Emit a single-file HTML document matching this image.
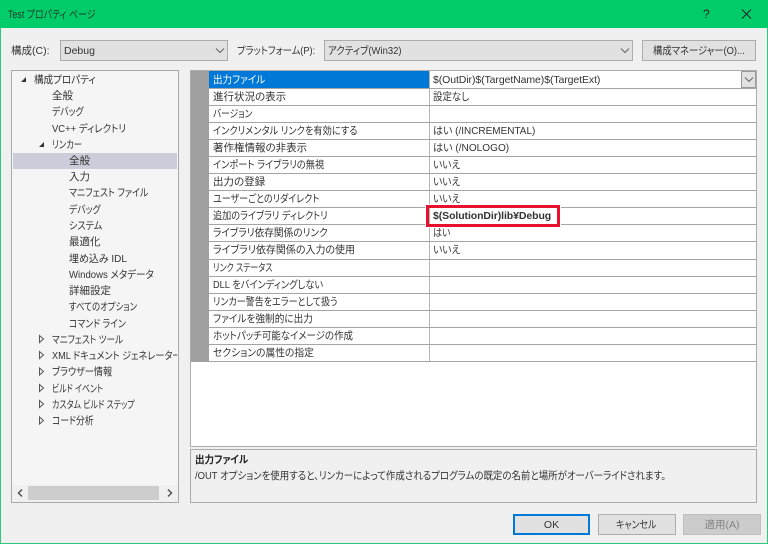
<!DOCTYPE html>
<html lang="ja">
<head>
<meta charset="utf-8">
<title>Test プロパティ ページ</title>
<style>
html,body{margin:0;padding:0;width:768px;height:544px;overflow:hidden;background:#f0f0f0}
body{position:relative;font-family:"Liberation Sans","Noto Sans CJK JP",sans-serif;font-size:10.5px;color:#333;font-feature-settings:"palt" 1}
#w{left:0;top:0;width:768px;height:544px;filter:blur(.35px)}
div{position:absolute;box-sizing:border-box;white-space:nowrap}
.t{line-height:16px;height:16px;margin-top:1px;transform:scaleX(var(--k,1));transform-origin:0 0}
.b{background:#e1e1e1;border:1px solid #adadad;text-align:center;line-height:20px}
.n{left:213px}
.v{left:433px}
.l{left:209px;width:547px;height:1px;background:#a5a5a5}
svg{position:absolute;overflow:visible}
</style>
</head>
<body>
<div id="w">
<div style="left:0;top:0;width:768px;height:544px;border:1px solid #2fc781;border-top:0"></div>
<div style="left:0;top:0;width:768px;height:28px;background:#00cc6a"></div>
<div class="t" style="left:8px;top:6px;font-size:11px;color:#1d3a2a;--k:.81">Test プロパティ ページ</div>
<div class="t" style="left:703px;top:5px;font-size:12px;color:#222">?</div>
<svg style="left:0;top:0" width="768" height="30"><path d="M742 9.5 L751 18.5 M751 9.5 L742 18.5" stroke="#222" stroke-width="1" fill="none"/></svg>

<div class="t" style="left:11px;top:42px">構成(C):</div>
<div class="b" style="left:60px;top:40px;width:168px;height:21px;text-align:left;padding-left:3px">Debug</div>
<div class="t" style="left:237px;top:42px;--k:.88">プラットフォーム(P):</div>
<div class="b" style="left:324px;top:40px;width:309px;height:21px"></div>
<div class="t" style="left:328px;top:42px;--k:.9">アクティブ(Win32)</div>
<div class="b" style="left:642px;top:40px;width:114px;height:21px"></div>
<div class="t" style="left:653px;top:42px;--k:.89">構成マネージャー(O)...</div>
<svg style="left:0;top:0" width="768" height="100">
<path d="M216 48.5 L220 52.5 L224 48.5 M621 48.5 L625 52.5 L629 48.5" stroke="#666" stroke-width="1" fill="none"/>
</svg>

<!-- tree -->
<div style="left:11px;top:70px;width:168px;height:433px;background:#f5f5f5;border:1px solid #a9a9a9"></div>
<div style="left:13px;top:153px;width:164px;height:16px;background:#cbcdda"></div>
<div class="t" style="left:34px;top:71px;--k:.91">構成プロパティ</div>
<div class="t" style="left:52px;top:87px">全般</div>
<div class="t" style="left:52px;top:103px;--k:.84">デバッグ</div>
<div class="t" style="left:52px;top:120px;--k:.9">VC++ ディレクトリ</div>
<div class="t" style="left:52px;top:136px;--k:.79">リンカー</div>
<div class="t" style="left:69px;top:152px">全般</div>
<div class="t" style="left:69px;top:168px">入力</div>
<div class="t" style="left:69px;top:184px;--k:.85">マニフェスト ファイル</div>
<div class="t" style="left:69px;top:201px;--k:.84">デバッグ</div>
<div class="t" style="left:69px;top:217px;--k:.87">システム</div>
<div class="t" style="left:69px;top:233px">最適化</div>
<div class="t" style="left:69px;top:250px;--k:.95">埋め込み IDL</div>
<div class="t" style="left:69px;top:266px;--k:.91">Windows メタデータ</div>
<div class="t" style="left:69px;top:282px">詳細設定</div>
<div class="t" style="left:69px;top:298px;--k:.8">すべてのオプション</div>
<div class="t" style="left:69px;top:315px;--k:.84">コマンド ライン</div>
<div class="t" style="left:52px;top:331px;--k:.82">マニフェスト ツール</div>
<div class="t" style="left:52px;top:347px;width:144px;overflow:hidden;--k:.87">XML ドキュメント ジェネレーター</div>
<div class="t" style="left:52px;top:363px;--k:.87">ブラウザー情報</div>
<div class="t" style="left:52px;top:380px;--k:.75">ビルド イベント</div>
<div class="t" style="left:52px;top:396px;--k:.76">カスタム ビルド ステップ</div>
<div class="t" style="left:52px;top:412px;--k:.84">コード分析</div>
<svg style="left:0;top:0" width="200" height="510">
<path d="M21 82 L26 82 L26 77 Z M39 147 L44 147 L44 142 Z" fill="#333"/>
<g fill="none" stroke="#555" stroke-width="1">
<path d="M39.5 335.5 L43.5 339 L39.5 342.5 Z"/>
<path d="M39.5 351.5 L43.5 355 L39.5 358.5 Z"/>
<path d="M39.5 368 L43.5 371.5 L39.5 375 Z"/>
<path d="M39.5 384.5 L43.5 388 L39.5 391.5 Z"/>
<path d="M39.5 400.5 L43.5 404 L39.5 407.5 Z"/>
<path d="M39.5 417 L43.5 420.5 L39.5 424 Z"/>
</g>
</svg>
<div style="left:12px;top:485px;width:166px;height:17px;background:#f0f0f0"></div>
<div style="left:28px;top:486px;width:131px;height:14px;background:#cdcdcd"></div>
<svg style="left:0;top:0" width="200" height="510">
<path d="M22 489.5 L18.5 493 L22 496.5 M168 489.5 L171.5 493 L168 496.5" fill="none" stroke="#555" stroke-width="1.5"/>
</svg>

<!-- grid -->
<div style="left:190px;top:70px;width:567px;height:377px;background:#fff;border:1px solid #adadad"></div>
<div style="left:191px;top:71px;width:18px;height:291px;background:#9f9f9f"></div>
<div style="left:209px;top:71px;width:220px;height:17px;background:#0078d7"></div>
<div style="left:429px;top:71px;width:1px;height:291px;background:#b5b5b5"></div>
<div style="left:741px;top:71px;width:15px;height:17px;background:#e1e1e1;border:1px solid #999"></div>
<svg style="left:0;top:0" width="768" height="100"><path d="M745 77.5 L749 81.5 L753 77.5" stroke="#666" stroke-width="1" fill="none"/></svg>
<div class="l" style="top:88px"></div>
<div class="l" style="top:105px"></div>
<div class="l" style="top:122px"></div>
<div class="l" style="top:139px"></div>
<div class="l" style="top:156px"></div>
<div class="l" style="top:173px"></div>
<div class="l" style="top:190px"></div>
<div class="l" style="top:207px"></div>
<div class="l" style="top:224px"></div>
<div class="l" style="top:241px"></div>
<div class="l" style="top:259px"></div>
<div class="l" style="top:276px"></div>
<div class="l" style="top:293px"></div>
<div class="l" style="top:310px"></div>
<div class="l" style="top:327px"></div>
<div class="l" style="top:344px"></div>
<div class="l" style="top:361px"></div>

<div class="t n" style="top:71px;color:#fff;--k:.91">出力ファイル</div>
<div class="t n" style="top:88px">進行状況の表示</div>
<div class="t n" style="top:105px;--k:.83">バージョン</div>
<div class="t n" style="top:122px;--k:.88">インクリメンタル リンクを有効にする</div>
<div class="t n" style="top:139px">著作権情報の非表示</div>
<div class="t n" style="top:156px;--k:.88">インポート ライブラリの無視</div>
<div class="t n" style="top:173px">出力の登録</div>
<div class="t n" style="top:190px;--k:.86">ユーザーごとのリダイレクト</div>
<div class="t n" style="top:207px;--k:.87">追加のライブラリ ディレクトリ</div>
<div class="t n" style="top:224px;--k:.92">ライブラリ依存関係のリンク</div>
<div class="t n" style="top:241px;--k:.95">ライブラリ依存関係の入力の使用</div>
<div class="t n" style="top:259px;--k:.76">リンク ステータス</div>
<div class="t n" style="top:276px;--k:.88">DLL をバインディングしない</div>
<div class="t n" style="top:293px;--k:.86">リンカー警告をエラーとして扱う</div>
<div class="t n" style="top:310px;--k:.92">ファイルを強制的に出力</div>
<div class="t n" style="top:327px;--k:.9">ホットパッチ可能なイメージの作成</div>
<div class="t n" style="top:344px;--k:.93">セクションの属性の指定</div>

<div class="t v" style="top:71px;letter-spacing:-.09px">$(OutDir)$(TargetName)$(TargetExt)</div>
<div class="t v" style="top:88px;--k:.9">設定なし</div>
<div class="t v" style="top:122px;--k:.95">はい (/INCREMENTAL)</div>
<div class="t v" style="top:139px;--k:.96">はい (/NOLOGO)</div>
<div class="t v" style="top:156px;--k:.93">いいえ</div>
<div class="t v" style="top:173px;--k:.93">いいえ</div>
<div class="t v" style="top:190px;--k:.93">いいえ</div>
<div class="t v" style="top:207px;font-weight:bold;letter-spacing:-.09px">$(SolutionDir)lib¥Debug</div>
<div class="t v" style="top:224px;--k:.85">はい</div>
<div class="t v" style="top:241px;--k:.93">いいえ</div>

<div style="left:426px;top:205px;width:134px;height:22px;border:3px solid #e8112d;box-shadow:0 0 0 1px #fff"></div>

<!-- description -->
<div style="left:190px;top:449px;width:567px;height:54px;background:#f0f0f0;border:1px solid #a9a9a9"></div>
<div class="t" style="left:195px;top:451px;font-weight:bold;color:#222;--k:.91">出力ファイル</div>
<div class="t" style="left:195px;top:467px;--k:.9">/OUT オプションを使用すると、リンカーによって作成されるプログラムの既定の名前と場所がオーバーライドされます。</div>

<!-- buttons -->
<div class="b" style="left:513px;top:514px;width:77px;height:21px;border:2px solid #0078d7;line-height:18px">OK</div>
<div class="b" style="left:598px;top:514px;width:78px;height:21px"></div>
<div class="t" style="left:616px;top:516px;--k:.85">キャンセル</div>
<div class="b" style="left:683px;top:514px;width:78px;height:21px;background:#ccc;border-color:#bfbfbf;color:#838383">適用(A)</div>
</div>
</body>
</html>
